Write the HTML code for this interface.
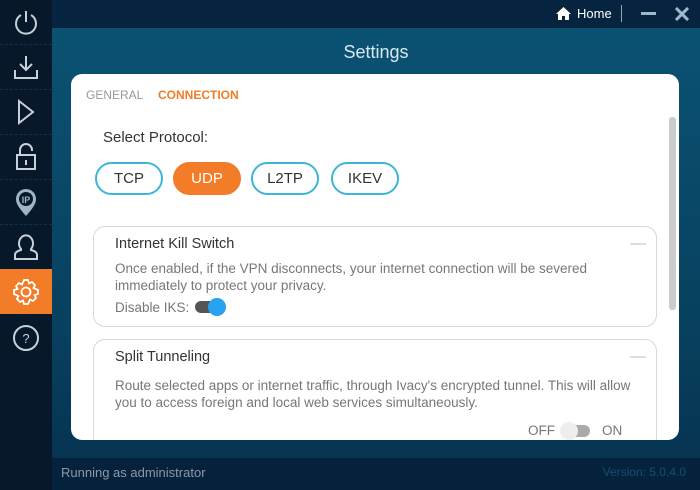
<!DOCTYPE html>
<html><head><style>
*{margin:0;padding:0;box-sizing:border-box}
body{width:700px;height:490px;overflow:hidden;font-family:"Liberation Sans",sans-serif;background:#0a4a68;position:relative}
.side{position:absolute;left:0;top:0;width:52px;height:490px;background:#07182a}
.si{position:absolute;left:0;width:52px;height:45px;border-bottom:1px dashed #1c2e3e;display:flex;align-items:center;justify-content:center}
.top{position:absolute;left:52px;top:0;right:0;height:28px;background:#06243f}
.main{position:absolute;left:52px;top:28px;right:0;height:430px;background:linear-gradient(#0b5272,#08405f 70%,#063452)}
.foot{position:absolute;left:52px;top:458px;right:0;height:32px;background:#05223d;color:#8a99a6;font-size:13px}
.card{position:absolute;left:71px;top:74px;width:608px;height:366px;background:#fff;border-radius:11px;overflow:hidden}
.btn{position:absolute;top:88px;height:33px;width:68px;border:2px solid #3bb6d8;border-radius:17px;font-size:15px;color:#333;display:flex;align-items:center;justify-content:center}
.box{position:absolute;left:22px;width:564px;border:1px solid #d8d8d8;border-radius:12px}
.t{position:absolute;left:21px;font-size:14.5px;color:#333}
.d{position:absolute;left:21px;font-size:13.5px;color:#777;line-height:17px}
.dash{position:absolute;right:10px;width:16px;height:2px;background:#ddd}
</style></head><body>
<div class="side">
 <div class="si" style="top:0"><svg width="28" height="28" viewBox="0 0 28 28" fill="none" stroke="#c8d0d8" stroke-width="2"><path d="M9 7A10 10 0 1 0 19 7"/><path d="M14 3v11"/></svg></div>
 <div class="si" style="top:45px"><svg width="26" height="26" viewBox="0 0 26 26" fill="none" stroke="#c8d0d8" stroke-width="2"><path d="M13 2v14M7 10l6 6 6-6M2 16v8h22v-8"/></svg></div>
 <div class="si" style="top:90px"><svg width="24" height="26" viewBox="0 0 24 26" fill="none" stroke="#c8d0d8" stroke-width="2"><path d="M5 2l14 11L5 24z"/></svg></div>
 <div class="si" style="top:135px"><svg width="24" height="28" viewBox="0 0 24 28" fill="none" stroke="#c8d0d8" stroke-width="2"><path d="M6 12V7a6 6 0 0 1 12 0v1"/><rect x="3" y="12" width="18" height="14"/><path d="M12 17v5"/></svg></div>
 <div class="si" style="top:180px"><svg width="24" height="30" viewBox="0 0 24 30"><path d="M12 29C4 20 2 16 2 12a10 10 0 0 1 20 0c0 4-2 8-10 17z" fill="#9fb4c4"/><circle cx="12" cy="12" r="7" fill="#07182a"/><text x="12" y="16" font-size="9" font-weight="bold" fill="#9fb4c4" text-anchor="middle" font-family="Liberation Sans">IP</text></svg></div>
 <div class="si" style="top:225px"><svg width="26" height="28" viewBox="0 0 26 28" fill="none" stroke="#c8d0d8" stroke-width="2"><path d="M8 16a7 8 0 1 1 10 0v1c4 1 6 3 6 5v4H2v-4c0-2 2-4 6-5z"/></svg></div>
 <div class="si" style="top:269px;background:#f27c27;border:none"><svg width="28" height="28" viewBox="0 0 28 28" fill="none" stroke="#fff" stroke-width="1.8"><circle cx="14" cy="14" r="4.5"/><path d="M12 2h4l1 3.5 3-1.5 3 3-1.5 3L26 12v4l-3.5 1 1.5 3-3 3-3-1.5L16 26h-4l-1-3.5-3 1.5-3-3 1.5-3L2 16v-4l3.5-1L4 8l3-3 3 1.5z"/></svg></div>
 <div class="si" style="top:315px;border:none"><svg width="28" height="28" viewBox="0 0 28 28" fill="none" stroke="#c8d0d8" stroke-width="2"><circle cx="14" cy="14" r="12"/><text x="14" y="19" font-size="13" fill="#c8d0d8" stroke="none" text-anchor="middle" font-family="Liberation Sans">?</text></svg></div>
</div>
<div class="top">
 <svg style="position:absolute;left:504px;top:6px" width="15" height="14" viewBox="0 0 15 14"><path d="M7.5 1L0 8h2v6h4v-4h3v4h4V8h2z" fill="#fff"/></svg>
 <div style="position:absolute;left:525px;top:6px;color:#fff;font-size:13px">Home</div>
 <div style="position:absolute;left:569px;top:5px;width:1px;height:17px;background:#8aa"></div>
 <div style="position:absolute;left:589px;top:12px;width:15px;height:3px;background:#9fb8cc"></div>
 <svg style="position:absolute;left:623px;top:7px" width="14" height="14" viewBox="0 0 14 14" stroke="#9fb8cc" stroke-width="3"><path d="M1 1l12 12M13 1L1 13"/></svg>
</div>
<div class="main"><div style="position:absolute;left:0;right:0;top:14px;text-align:center;color:#d8e8f0;font-size:18px">Settings</div></div>
<div class="card">
 <div style="position:absolute;left:15px;top:14px;font-size:12px;color:#999">GENERAL</div>
 <div style="position:absolute;left:87px;top:14px;font-size:12px;color:#f27c27;font-weight:bold">CONNECTION</div>
 <div style="position:absolute;left:32px;top:55px;font-size:15px;color:#333">Select Protocol:</div>
 <div class="btn" style="left:24px">TCP</div>
 <div class="btn" style="left:102px;background:#f27c27;border-color:#f27c27;color:#fff">UDP</div>
 <div class="btn" style="left:180px">L2TP</div>
 <div class="btn" style="left:260px">IKEV</div>
 <div style="position:absolute;left:598px;top:43px;width:7px;height:193px;background:#ccc;border-radius:3px"></div>
 <div class="box" style="top:152px;height:101px">
  <div class="t" style="top:9px">Internet Kill Switch</div>
  <div class="dash" style="top:16px"></div>
  <div class="d" style="top:33px">Once enabled, if the VPN disconnects, your internet connection will be severed<br>immediately to protect your privacy.</div>
  <div class="d" style="top:72px">Disable IKS:</div>
  <div style="position:absolute;left:101px;top:74px;width:26px;height:12px;border-radius:6px;background:#555"></div>
  <div style="position:absolute;left:114px;top:71px;width:18px;height:18px;border-radius:9px;background:#29a3f0"></div>
 </div>
 <div class="box" style="top:265px;height:120px">
  <div class="t" style="top:9px">Split Tunneling</div>
  <div class="dash" style="top:16px"></div>
  <div class="d" style="top:37px">Route selected apps or internet traffic, through Ivacy's encrypted tunnel. This will allow<br>you to access foreign and local web services simultaneously.</div>
  <div class="d" style="left:434px;top:82px">OFF</div>
  <div style="position:absolute;left:470px;top:85px;width:26px;height:12px;border-radius:6px;background:#aaa"></div>
  <div style="position:absolute;left:466px;top:82px;width:18px;height:18px;border-radius:9px;background:#eee"></div>
  <div class="d" style="left:508px;top:82px">ON</div>
 </div>
</div>
<div class="foot"><div style="position:absolute;left:9px;top:7px">Running as administrator</div><div style="position:absolute;right:14px;top:7px;color:#13506e;font-size:12px">Version: 5.0.4.0</div></div>
</body></html>
